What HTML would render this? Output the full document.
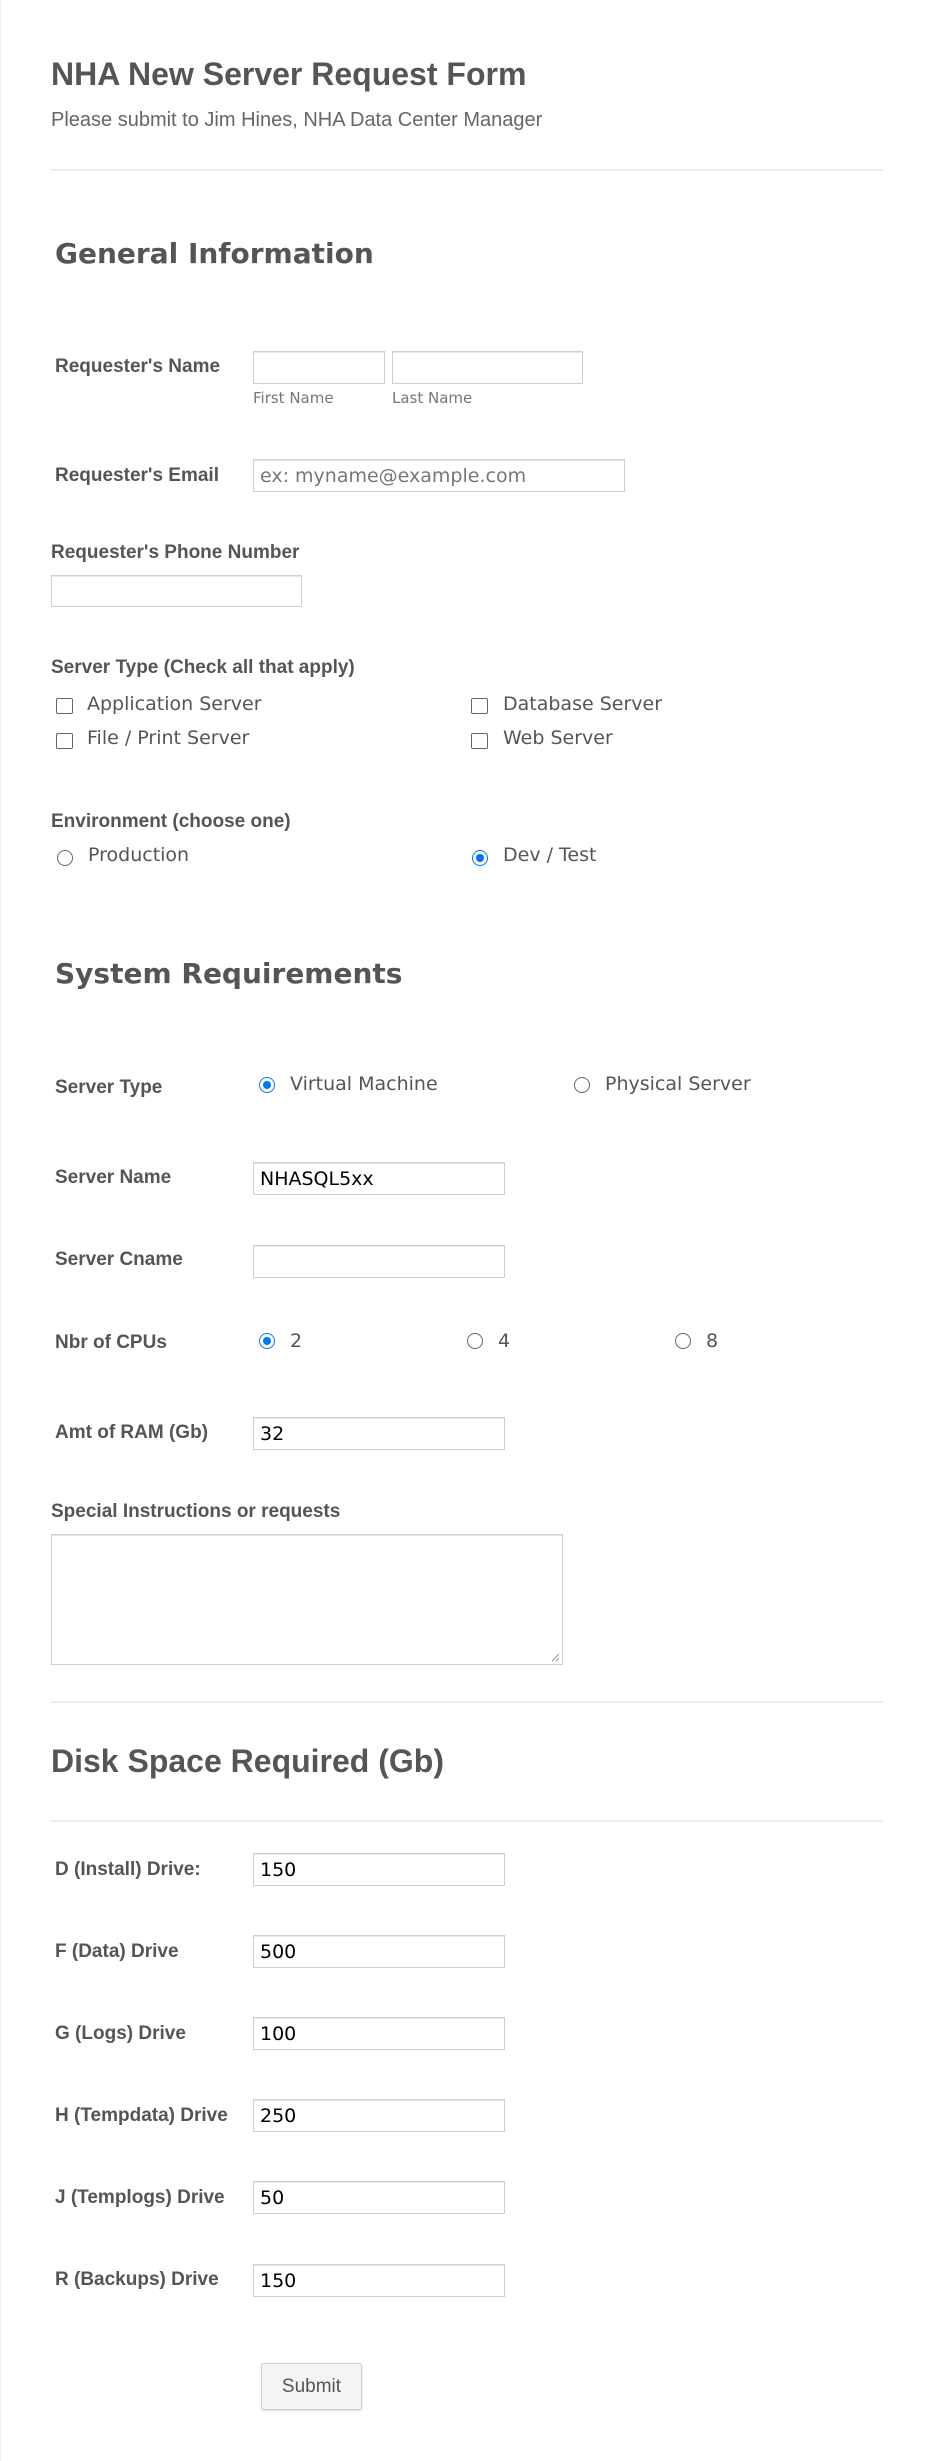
<!DOCTYPE html>
<html><head><meta charset="utf-8">
<style>
*{margin:0;padding:0;box-sizing:border-box}
html,body{width:930px;height:2461px;background:#fff;overflow:hidden}
body{position:relative;font-family:"Liberation Sans",Arial,sans-serif;color:#555}
.a{position:absolute;line-height:1;white-space:nowrap}
.lb{font-weight:bold;font-size:19px;color:#555;margin-top:2px}
.dj{font-family:"DejaVu Sans",sans-serif}
.opt{font-size:19px;color:#555;font-family:"DejaVu Sans",sans-serif}
.in{position:absolute;border:1px solid #cfcfcf;box-shadow:inset 0 1px 0 #e8e8e8;background:#fff;font-family:"DejaVu Sans",sans-serif;font-size:19px;color:#000;padding-left:6px;line-height:33px;white-space:nowrap}
.hr{position:absolute;left:51px;width:832px;height:2px;background:#ececec}
.cb{position:absolute;width:17px;height:16px;border:1.3px solid #666;border-radius:2px;background:#fff}
.rd{position:absolute;width:16px;height:16px;border:1.3px solid #666;border-radius:50%;background:#fff}
.rd.on{border:1.5px solid #0075ff}
.rd.on::after{content:"";position:absolute;left:2.5px;top:2.5px;width:8px;height:8px;border-radius:50%;background:#0075ff}
.h2{font-family:"DejaVu Sans",sans-serif;font-weight:bold;font-size:28px;color:#555}
</style></head><body>
<div style="position:absolute;left:0;top:0;width:1px;height:2461px;background:#f0f0f0"></div>

<div class="a" style="left:51px;top:58px;font-size:32px;font-weight:bold">NHA New Server Request Form</div>
<div class="a" style="left:51px;top:110px;font-size:20px;color:#666">Please submit to Jim Hines, NHA Data Center Manager</div>
<div class="hr" style="top:169px"></div>

<div class="a h2" style="left:55px;top:240px">General Information</div>

<div class="a lb" style="left:55px;top:355px">Requester's Name</div>
<div class="in" style="left:253px;top:351px;width:132px;height:33px"></div>
<div class="in" style="left:392px;top:351px;width:191px;height:33px"></div>
<div class="a dj" style="left:253px;top:391px;font-size:15px;color:#777">First Name</div>
<div class="a dj" style="left:392px;top:391px;font-size:15px;color:#777">Last Name</div>

<div class="a lb" style="left:55px;top:464px">Requester's Email</div>
<div class="in" style="left:253px;top:459px;width:372px;height:33px;color:#777">ex: myname@example.com</div>

<div class="a lb" style="left:51px;top:541px">Requester's Phone Number</div>
<div class="in" style="left:51px;top:575px;width:251px;height:32px"></div>

<div class="a lb" style="left:51px;top:656px">Server Type (Check all that apply)</div>
<div class="cb" style="left:56px;top:698px"></div><div class="a opt" style="left:87px;top:695px">Application Server</div>
<div class="cb" style="left:471px;top:698px"></div><div class="a opt" style="left:503px;top:695px">Database Server</div>
<div class="cb" style="left:56px;top:733px"></div><div class="a opt" style="left:87px;top:729px">File / Print Server</div>
<div class="cb" style="left:471px;top:733px"></div><div class="a opt" style="left:503px;top:729px">Web Server</div>

<div class="a lb" style="left:51px;top:810px">Environment (choose one)</div>
<div class="rd" style="left:57px;top:850px"></div><div class="a opt" style="left:88px;top:846px">Production</div>
<div class="rd on" style="left:472px;top:850px"></div><div class="a opt" style="left:503px;top:846px">Dev / Test</div>

<div class="a h2" style="left:55px;top:960px">System Requirements</div>

<div class="a lb" style="left:55px;top:1076px">Server Type</div>
<div class="rd on" style="left:259px;top:1077px"></div><div class="a opt" style="left:290px;top:1075px">Virtual Machine</div>
<div class="rd" style="left:574px;top:1077px"></div><div class="a opt" style="left:605px;top:1075px">Physical Server</div>

<div class="a lb" style="left:55px;top:1166px">Server Name</div>
<div class="in" style="left:253px;top:1162px;width:252px;height:33px">NHASQL5xx</div>

<div class="a lb" style="left:55px;top:1248px">Server Cname</div>
<div class="in" style="left:253px;top:1245px;width:252px;height:33px"></div>

<div class="a lb" style="left:55px;top:1331px">Nbr of CPUs</div>
<div class="rd on" style="left:259px;top:1333px"></div><div class="a opt" style="left:290px;top:1332px">2</div>
<div class="rd" style="left:467px;top:1333px"></div><div class="a opt" style="left:498px;top:1332px">4</div>
<div class="rd" style="left:675px;top:1333px"></div><div class="a opt" style="left:706px;top:1332px">8</div>

<div class="a lb" style="left:55px;top:1421px">Amt of RAM (Gb)</div>
<div class="in" style="left:253px;top:1417px;width:252px;height:33px">32</div>

<div class="a lb" style="left:51px;top:1500px">Special Instructions or requests</div>
<div class="in" style="left:51px;top:1534px;width:512px;height:131px"></div>
<svg style="position:absolute;left:550px;top:1652px" width="10" height="10"><path d="M9 2L2 9M9 6L6 9" stroke="#999" stroke-width="1"/></svg>

<div class="hr" style="top:1701px"></div>
<div class="a" style="left:51px;top:1745px;font-size:32px;font-weight:bold">Disk Space Required (Gb)</div>
<div class="hr" style="top:1820px"></div>

<div class="a lb" style="left:55px;top:1858px">D (Install) Drive:</div>
<div class="in" style="left:253px;top:1853px;width:252px;height:33px">150</div>
<div class="a lb" style="left:55px;top:1940px">F (Data) Drive</div>
<div class="in" style="left:253px;top:1935px;width:252px;height:33px">500</div>
<div class="a lb" style="left:55px;top:2022px">G (Logs) Drive</div>
<div class="in" style="left:253px;top:2017px;width:252px;height:33px">100</div>
<div class="a lb" style="left:55px;top:2104px">H (Tempdata) Drive</div>
<div class="in" style="left:253px;top:2099px;width:252px;height:33px">250</div>
<div class="a lb" style="left:55px;top:2186px">J (Templogs) Drive</div>
<div class="in" style="left:253px;top:2181px;width:252px;height:33px">50</div>
<div class="a lb" style="left:55px;top:2268px">R (Backups) Drive</div>
<div class="in" style="left:253px;top:2264px;width:252px;height:33px">150</div>

<div style="position:absolute;left:261px;top:2363px;width:101px;height:47px;background:#f4f4f4;border:1px solid #cdcdcd;border-radius:3px;box-shadow:0 1px 2px rgba(0,0,0,.15);font-size:19px;color:#555;text-align:center;line-height:45px">Submit</div>
</body></html>
